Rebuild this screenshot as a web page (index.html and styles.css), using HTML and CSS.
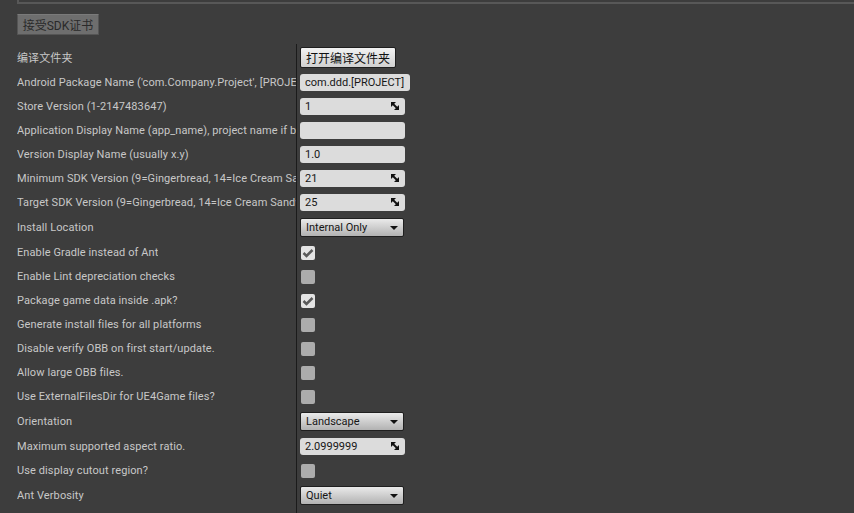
FILE: index.html
```html
<!DOCTYPE html>
<html>
<head>
<meta charset="utf-8">
<link rel="stylesheet" href="styles.css">
</head>
<body>
<div class="page">
  <div class="topbox"></div>
  <div class="accept-wrap"><button class="btn-dim">接受SDK证书</button></div>
  <div class="grid">
    <div class="labels">
      <div class="lbl r26"><span>编译文件夹</span></div>
      <div class="lbl"><span>Android Package Name ('com.Company.Project', [PROJECT] is replaced with project name)</span></div>
      <div class="lbl"><span>Store Version (1-2147483647)</span></div>
      <div class="lbl"><span>Application Display Name (app_name), project name if blank</span></div>
      <div class="lbl"><span>Version Display Name (usually x.y)</span></div>
      <div class="lbl"><span>Minimum SDK Version (9=Gingerbread, 14=Ice Cream Sandwich, 21=Lollipop)</span></div>
      <div class="lbl"><span>Target SDK Version (9=Gingerbread, 14=Ice Cream Sandwich, 21=Lollipop)</span></div>
      <div class="lbl r26"><span>Install Location</span></div>
      <div class="lbl"><span>Enable Gradle instead of Ant</span></div>
      <div class="lbl"><span>Enable Lint depreciation checks</span></div>
      <div class="lbl"><span>Package game data inside .apk?</span></div>
      <div class="lbl"><span>Generate install files for all platforms</span></div>
      <div class="lbl"><span>Disable verify OBB on first start/update.</span></div>
      <div class="lbl"><span>Allow large OBB files.</span></div>
      <div class="lbl"><span>Use ExternalFilesDir for UE4Game files?</span></div>
      <div class="lbl r26"><span>Orientation</span></div>
      <div class="lbl"><span>Maximum supported aspect ratio.</span></div>
      <div class="lbl"><span>Use display cutout region?</span></div>
      <div class="lbl r26"><span>Ant Verbosity</span></div>
    </div>
    <div class="values">
      <div class="val r26"><button class="btn-light">打开编译文件夹</button></div>
      <div class="val"><div class="field wide"><span class="txt">com.ddd.[PROJECT]</span></div></div>
      <div class="val"><div class="field"><span class="txt">1</span><svg class="spin-ic" viewBox="0 0 8 8" width="8" height="8"><polygon points="0,0 5,0 0,5" fill="#111"/><polygon points="8,8 3,8 8,3" fill="#111"/><line x1="1" y1="1" x2="7" y2="7" stroke="#111" stroke-width="2"/></svg></div></div>
      <div class="val"><div class="field"><span class="txt"></span></div></div>
      <div class="val"><div class="field"><span class="txt">1.0</span></div></div>
      <div class="val"><div class="field"><span class="txt">21</span><svg class="spin-ic" viewBox="0 0 8 8" width="8" height="8"><polygon points="0,0 5,0 0,5" fill="#111"/><polygon points="8,8 3,8 8,3" fill="#111"/><line x1="1" y1="1" x2="7" y2="7" stroke="#111" stroke-width="2"/></svg></div></div>
      <div class="val"><div class="field"><span class="txt">25</span><svg class="spin-ic" viewBox="0 0 8 8" width="8" height="8"><polygon points="0,0 5,0 0,5" fill="#111"/><polygon points="8,8 3,8 8,3" fill="#111"/><line x1="1" y1="1" x2="7" y2="7" stroke="#111" stroke-width="2"/></svg></div></div>
      <div class="val r26"><div class="combo"><span class="txt">Internal Only</span><span class="arrow"></span></div></div>
      <div class="val"><span class="cb on"><svg viewBox="0 0 14 14" width="14" height="14"><polyline points="2.5,7 5.5,10 11.5,4" fill="none" stroke="#5a5a5a" stroke-width="2.5"/></svg></span></div>
      <div class="val"><span class="cb"></span></div>
      <div class="val"><span class="cb on"><svg viewBox="0 0 14 14" width="14" height="14"><polyline points="2.5,7 5.5,10 11.5,4" fill="none" stroke="#5a5a5a" stroke-width="2.5"/></svg></span></div>
      <div class="val"><span class="cb"></span></div>
      <div class="val"><span class="cb"></span></div>
      <div class="val"><span class="cb"></span></div>
      <div class="val"><span class="cb"></span></div>
      <div class="val r26"><div class="combo"><span class="txt">Landscape</span><span class="arrow"></span></div></div>
      <div class="val"><div class="field"><span class="txt">2.0999999</span><svg class="spin-ic" viewBox="0 0 8 8" width="8" height="8"><polygon points="0,0 5,0 0,5" fill="#111"/><polygon points="8,8 3,8 8,3" fill="#111"/><line x1="1" y1="1" x2="7" y2="7" stroke="#111" stroke-width="2"/></svg></div></div>
      <div class="val"><span class="cb"></span></div>
      <div class="val r26"><div class="combo"><span class="txt">Quiet</span><span class="arrow"></span></div></div>
    </div>
  </div>
</div>
</body>
</html>
```
FILE: styles.css
```css
html, body {
  margin: 0;
  padding: 0;
  background: #3d3d3d;
  overflow: hidden;
}
.page {
  width: 854px;
  height: 513px;
  overflow: hidden;
  font-family: Roboto, "Noto Sans CJK SC", sans-serif;
  font-size: 11px;
  color: #c8c8c8;
}
.topbox {
  margin-left: 17px;
  height: 2px;
  border-left: 2px solid #585858;
  border-bottom: 2px solid #585858;
}
.accept-wrap {
  padding: 10px 0 0 17px;
  height: 24px;
  display: flex;
  align-items: flex-start;
}
.btn-dim {
  height: 21px;
  width: 82px;
  padding: 0;
  margin: 0;
  background: #6e6e6e;
  border: 1px solid #555;
  border-top-color: #7a7a7a;
  color: #2a2a2a;
  font-family: Roboto, "Noto Sans CJK SC", sans-serif;
  font-size: 12px;
  border-radius: 1px;
}
.grid {
  margin-top: 6px;
  display: grid;
  grid-template-columns: 279px 1px 1fr;
  margin-left: 17px;
}
.grid::before {
  content: "";
  grid-column: 2;
  grid-row: 1;
  background: #1b1b1b;
  height: 600px;
}
.labels {
  grid-column: 1;
  grid-row: 1;
  overflow: hidden;
}
.values {
  grid-column: 3;
  grid-row: 1;
  padding-left: 3px;
}
.lbl, .val {
  height: 24px;
  display: flex;
  align-items: center;
  white-space: nowrap;
}
.lbl {
  overflow: hidden;
  letter-spacing: 0.1px;
}
.lbl span {
  display: block;
  max-width: 279px;
  overflow: hidden;
}
.r26 { height: 26px; }
.btn-light {
  height: 21px;
  width: 96px;
  margin: 0;
  padding: 0;
  border: 1px solid #1e1e1e;
  border-radius: 2px;
  background: linear-gradient(#f2f2f2, #d0d0d0);
  color: #111;
  font-family: Roboto, "Noto Sans CJK SC", sans-serif;
  font-size: 12px;
}
.field {
  display: flex;
  align-items: center;
  box-sizing: border-box;
  width: 105px;
  height: 17px;
  background: #dcdcdc;
  border-radius: 3px;
  color: #161616;
  padding: 0 6px 0 5px;
  font-size: 11px;
}
.field.wide { width: 110px; padding-right: 2px; }
.txt {
  flex: 1;
  white-space: nowrap;
  overflow: hidden;
}
.spin-ic {
  flex: none;
  display: block;
}
.combo {
  display: flex;
  align-items: center;
  box-sizing: border-box;
  width: 104px;
  height: 19px;
  border: 1px solid #1f1f1f;
  border-radius: 2px;
  background: linear-gradient(#eaeaea, #b2b2b2);
  color: #161616;
  padding: 0 5px 0 5px;
  font-size: 11px;
}
.arrow {
  flex: none;
  width: 0;
  height: 0;
  margin-top: 1px;
  border-left: 4px solid transparent;
  border-right: 4px solid transparent;
  border-top: 4px solid #111;
}
.cb {
  display: block;
  width: 14px;
  height: 14px;
  margin: 2px 0 0 1px;
  border-radius: 2px;
  background: #acacac;
}
.cb.on { background: #e4e4e4; }
.cb svg { display: block; }
```
